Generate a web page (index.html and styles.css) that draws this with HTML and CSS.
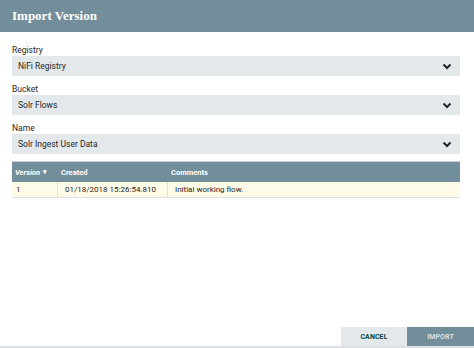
FILE: index.html
```html
<!DOCTYPE html>
<html lang="en">

<head>
  <meta charset="UTF-8">
  <title>Import Version</title>
  <link rel="stylesheet" href="styles.css">
</head>

<body>
  <div class="dialog">
    <div class="dialog-header">Import Version</div>

    <div class="dialog-body">
      <div class="field">
        <div class="label">Registry</div>
        <div class="select"><span>NiFi Registry</span><svg class="chev" width="10" height="7" viewBox="0 0 10 7"><path d="M1.5 1.5 L5 5 L8.5 1.5" fill="none" stroke="#262626" stroke-width="2"/></svg></div>
      </div>
      <div class="field">
        <div class="label">Bucket</div>
        <div class="select"><span>Solr Flows</span><svg class="chev" width="10" height="7" viewBox="0 0 10 7"><path d="M1.5 1.5 L5 5 L8.5 1.5" fill="none" stroke="#262626" stroke-width="2"/></svg></div>
      </div>
      <div class="field">
        <div class="label">Name</div>
        <div class="select"><span>Solr Ingest User Data</span><svg class="chev" width="10" height="7" viewBox="0 0 10 7"><path d="M1.5 1.5 L5 5 L8.5 1.5" fill="none" stroke="#262626" stroke-width="2"/></svg></div>
      </div>

      <div class="grid">
        <div class="grid-head">
          <div class="col c1 sorted">Version <span class="caret">&#9662;</span></div>
          <div class="col c2">Created</div>
          <div class="col c3">Comments</div>
        </div>
        <div class="grid-row">
          <div class="col c1">1</div>
          <div class="col c2">01/18/2018 15:26:54.810</div>
          <div class="col c3">Initial working flow.</div>
        </div>
      </div>
    </div>

    <div class="dialog-footer">
      <div class="btn cancel">CANCEL</div>
      <div class="btn import">IMPORT</div>
    </div>
  </div>
</body>

</html>
```

FILE: styles.css
```css
body {
  margin: 0;
  overflow: hidden;
  font-family: Roboto, "Liberation Sans", sans-serif;
  background: #ffffff;
}

.dialog {
  width: 474px;
  height: 348px;
  display: flex;
  flex-direction: column;
}

.dialog-header {
  height: 32px;
  background-color: #728e9b;
  color: #ffffff;
  font-family: "Liberation Serif", serif;
  font-weight: bold;
  font-size: 13px;
  line-height: 32px;
  padding-left: 12px;
}

.dialog-body {
  flex: 1;
  padding: 12px 14px 0 12px;
}

.field {
  margin-bottom: 7px;
}

.label {
  font-size: 8.5px;
  color: #262626;
  line-height: 12px;
}

.select {
  height: 20px;
  background-color: #e3e8eb;
  display: flex;
  align-items: center;
  justify-content: space-between;
  padding: 0 6px 0 6px;
  font-size: 8.5px;
  color: #262626;
}

.chev {
  margin-right: 2px;
}

.grid {
  margin-top: 5px;
}

.grid-head {
  display: flex;
  height: 20px;
  background-color: #728e9b;
  color: #ffffff;
  font-size: 7.5px;
  font-weight: bold;
  border-top: 1px solid #c7d2d7;
}

.grid-row {
  display: flex;
  height: 15px;
  background-color: #fffbe9;
  font-size: 8px;
  color: #262626;
  border-bottom: 1px solid #dde1e4;
}

.col {
  display: flex;
  align-items: center;
  padding-left: 4px;
  box-sizing: border-box;
  white-space: nowrap;
  flex-shrink: 0;
}

.grid-head .col {
  padding-left: 3px;
}

.grid-row .col {
  border-right: 1px solid #e3e1d4;
}

.grid-row .c1 {
  padding-left: 4px;
}

.grid-row .c2 {
  padding-left: 7px;
}

.grid-row .c3 {
  padding-left: 7px;
  border-right: none;
}

.c1 {
  width: 46px;
}

.c2 {
  width: 110px;
}

.c3 {
  flex: 1;
}

.sorted {
  font-style: italic;
}

.caret {
  font-style: normal;
  font-size: 7px;
  margin-left: 3px;
}

.dialog-footer {
  display: flex;
  justify-content: flex-end;
  border-bottom: 2px solid #dde1e4;
}

.btn {
  width: 66px;
  height: 19px;
  display: flex;
  align-items: center;
  justify-content: center;
  font-size: 7px;
  font-weight: bold;
  letter-spacing: 0.1px;
}

.cancel {
  background-color: #e3e8eb;
  color: #004849;
}

.import {
  width: 67px;
  background-color: #728e9b;
  color: #d8e0e4;
}
```
